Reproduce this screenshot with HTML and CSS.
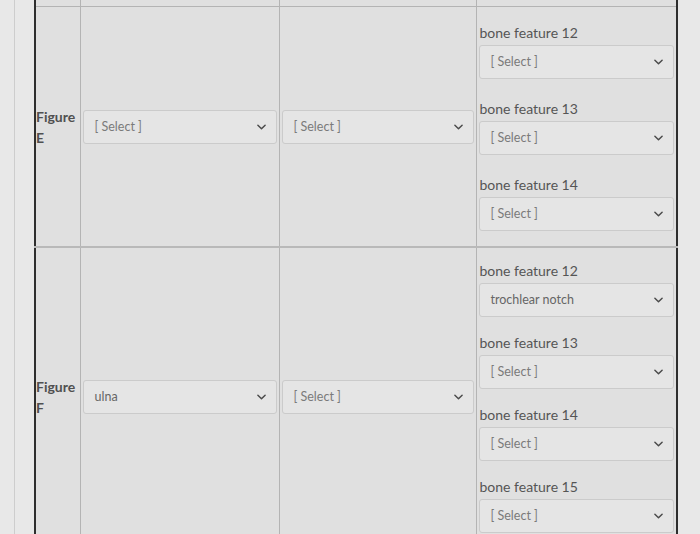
FILE: index.html
```html
<!DOCTYPE html>
<html>
<head>
<meta charset="utf-8">
<link rel="stylesheet" href="styles.css">
</head>
<body>
<div class="page">
  <table class="quiz">
    <colgroup>
      <col class="c1"><col class="c2"><col class="c3"><col class="c4">
    </colgroup>
    <tr class="stub"><td></td><td></td><td></td><td></td></tr>
    <tr class="row-e">
      <td class="fig">Figure E</td>
      <td><div class="select"><span>[ Select ]</span><svg viewBox="0 0 10 6" class="chev"><path d="M1 1l4 4 4-4"/></svg></div></td>
      <td><div class="select"><span>[ Select ]</span><svg viewBox="0 0 10 6" class="chev"><path d="M1 1l4 4 4-4"/></svg></div></td>
      <td class="feat">
        <div class="item"><div class="lbl">bone feature 12</div><div class="select"><span>[ Select ]</span><svg viewBox="0 0 10 6" class="chev"><path d="M1 1l4 4 4-4"/></svg></div></div>
        <div class="item"><div class="lbl">bone feature 13</div><div class="select"><span>[ Select ]</span><svg viewBox="0 0 10 6" class="chev"><path d="M1 1l4 4 4-4"/></svg></div></div>
        <div class="item"><div class="lbl">bone feature 14</div><div class="select"><span>[ Select ]</span><svg viewBox="0 0 10 6" class="chev"><path d="M1 1l4 4 4-4"/></svg></div></div>
      </td>
    </tr>
    <tr class="row-f">
      <td class="fig">Figure F</td>
      <td><div class="select"><span class="val">ulna</span><svg viewBox="0 0 10 6" class="chev"><path d="M1 1l4 4 4-4"/></svg></div></td>
      <td><div class="select"><span>[ Select ]</span><svg viewBox="0 0 10 6" class="chev"><path d="M1 1l4 4 4-4"/></svg></div></td>
      <td class="feat">
        <div class="item"><div class="lbl">bone feature 12</div><div class="select"><span class="val">trochlear notch</span><svg viewBox="0 0 10 6" class="chev"><path d="M1 1l4 4 4-4"/></svg></div></div>
        <div class="item"><div class="lbl">bone feature 13</div><div class="select"><span>[ Select ]</span><svg viewBox="0 0 10 6" class="chev"><path d="M1 1l4 4 4-4"/></svg></div></div>
        <div class="item"><div class="lbl">bone feature 14</div><div class="select"><span>[ Select ]</span><svg viewBox="0 0 10 6" class="chev"><path d="M1 1l4 4 4-4"/></svg></div></div>
        <div class="item"><div class="lbl">bone feature 15</div><div class="select"><span>[ Select ]</span><svg viewBox="0 0 10 6" class="chev"><path d="M1 1l4 4 4-4"/></svg></div></div>
      </td>
    </tr>
  </table>
</div>
</body>
</html>
```

FILE: styles.css
```css
html, body {
  margin: 0;
  padding: 0;
  background: #e8e8e8;
  height: 534px;
  overflow: hidden;
}
body {
  font-family: Lato, "Open Sans", "Liberation Sans", sans-serif;
  color: #4a4a4a;
}
.page {
  margin-left: 14px;
  border-left: 1px solid #cdcdcd;
  padding-left: 19px;
  height: 534px;
}
.quiz {
  border-collapse: collapse;
  table-layout: fixed;
  width: 644px;
  background: #e0e0e0;
  border-left: 2px solid #2e2e2e;
  border-right: 2px solid #2e2e2e;
}
.c1 { width: 45px; }
.c2 { width: 199px; }
.c3 { width: 197px; }
.c4 { width: 201px; }
.quiz td {
  border: 1px solid #b4b4b4;
  border-top: none;
  padding: 0 2px;
  vertical-align: middle;
}
.quiz tr.row-e td { border-bottom: 2px solid #b9b9b9; }
.stub td { height: 6px; }
.row-e td { height: 239px; }
.row-f td { height: 297px; }
.fig {
  font-size: 14px;
  font-weight: 700;
  line-height: 21px;
  color: #505050;
  padding-left: 0 !important;
  word-spacing: 40px;
}
.row-e .item + .item { margin-top: 20px; }
.row-f .item + .item { margin-top: 16px; }
.lbl {
  font-size: 14px;
  line-height: 20px;
  color: #555;
  margin-bottom: 2px;
  padding-left: 1px;
}
.select {
  height: 32px;
  border: 1px solid #cbcbcb;
  border-radius: 3px;
  background: #e5e5e5;
  display: flex;
  align-items: center;
  justify-content: space-between;
  padding: 0 10px 0 11px;
  font-size: 12.5px;
  color: #7a7a7a;
}
.select .val { color: #666; }
.chev {
  width: 9px;
  height: 6px;
  fill: none;
  stroke: #4a4a4a;
  stroke-width: 1.6;
  stroke-linecap: round;
  stroke-linejoin: round;
}
```
